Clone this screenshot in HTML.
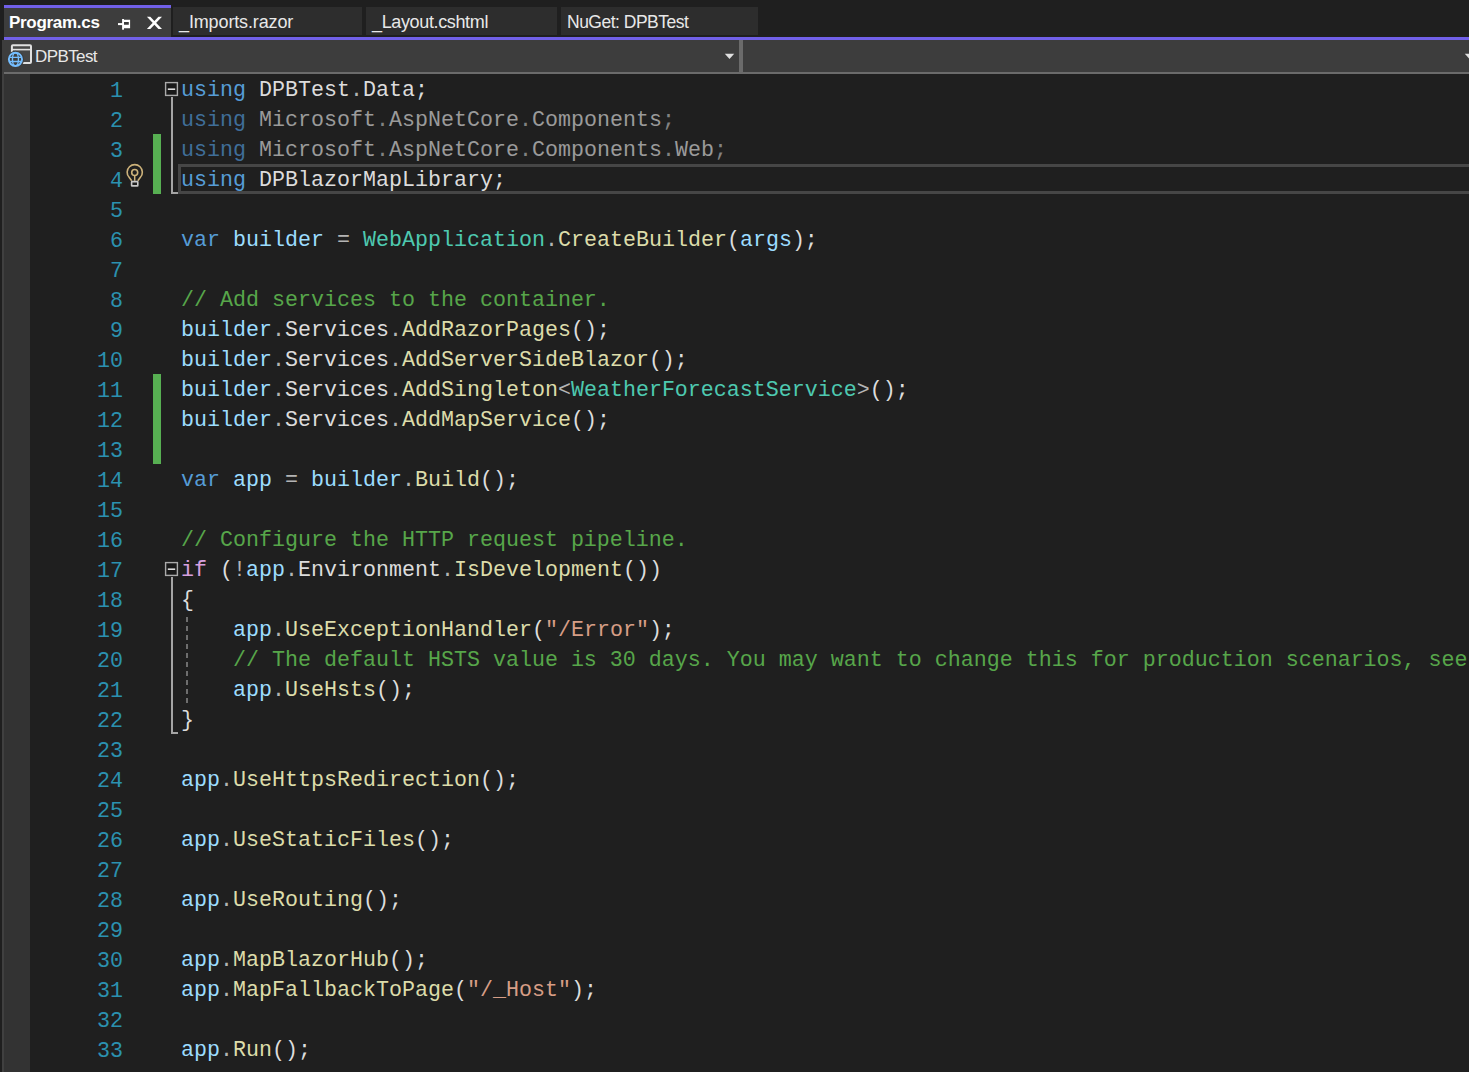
<!DOCTYPE html>
<html><head><meta charset="utf-8">
<style>
*{margin:0;padding:0;box-sizing:border-box}
html,body{width:1469px;height:1072px;overflow:hidden;background:#1f1f1f}
body{position:relative;font-family:"Liberation Sans",sans-serif}
.abs{position:absolute}
.tab{position:absolute;top:7px;height:28px;background:#2d2d2d;color:#e8e8e8;font-size:17px;line-height:28px;white-space:nowrap}
#t1{left:4px;top:5px;width:167px;height:32px;background:#3d3d3d;border-top:3px solid #7160e8;color:#fff;font-weight:bold;font-size:16.5px}
#purple{left:4px;top:37px;width:1465px;height:3px;background:#7160e8}
#nav{left:2px;top:40px;width:1467px;height:32px;background:#3d3d3d}
#navline{left:4px;top:72px;width:1465px;height:2px;background:#6b6b6b}
#navsep{left:739px;top:40px;width:4px;height:32px;background:#6b6b6b}
#margin{left:2px;top:74px;width:28px;height:998px;background:#333}
#marginedge{left:2px;top:72px;width:2px;height:1000px;background:#404040}
.code{position:absolute;left:0;top:74px;width:1469px;font-family:"Liberation Mono",monospace;font-size:21.66px;line-height:30px;white-space:pre}
.ln{position:absolute;left:0;width:123px;text-align:right;color:#2b91af;font-family:"Liberation Mono",monospace;font-size:21.66px;line-height:30px}
.l{position:absolute;left:181px;height:30px;color:#dcdcdc;font-family:"Liberation Mono",monospace;font-size:21.66px;line-height:30px;white-space:pre}
.k{color:#569cd6}.c{color:#4ec9b0}.m{color:#dcdcaa}.v{color:#9cdcfe}.p{color:#b4b4b4}.s{color:#d69d85}.g{color:#57a64a}.i{color:#d8a0df}
.fk{color:#3f6e99}.ft{color:#9a9a9a}.fp{color:#828282}
</style></head><body>
<div class="tab" id="t1"><span class="abs" style="left:5px;top:-1px;line-height:31px;font-size:17px;letter-spacing:-0.3px">Program.cs</span></div>
<div class="tab" style="left:173px;width:189px"><span class="abs" style="left:6px;top:1px;font-size:18px;letter-spacing:-0.13px">_Imports.razor</span></div>
<div class="tab" style="left:366px;width:191px"><span class="abs" style="left:6px;top:1px;font-size:18px;letter-spacing:-0.36px">_Layout.cshtml</span></div>
<div class="tab" style="left:561px;width:197px"><span class="abs" style="left:6px;top:1px;font-size:17.5px;letter-spacing:-0.5px">NuGet: DPBTest</span></div>
<div class="abs" id="purple"></div>
<div class="abs" id="nav"><span class="abs" style="left:33px;top:1px;line-height:32px;font-size:17px;letter-spacing:-0.6px;color:#e8e8e8">DPBTest</span></div>
<div class="abs" id="navsep"></div>
<div class="abs" id="navline"></div>
<div class="abs" id="margin"></div>
<div class="abs" id="marginedge"></div>

<!-- tab icons -->
<svg class="abs" style="left:112px;top:12px" width="56" height="24" viewBox="0 0 56 24">
 <path d="M6 12.1H11" stroke="#fff" stroke-width="2" fill="none"/>
 <rect x="10.1" y="7" width="1.9" height="10.7" fill="#fff"/>
 <path d="M12 7.8H18.1V16.2H12V12.8H16.8V10.1H12Z" fill="#fff"/>
 <path d="M34.9 4.85H38.3L50 16.95H46.4Z M46.4 4.85H50L38.3 16.95H34.9Z" fill="#fff"/>
</svg>
<!-- nav icon -->
<svg class="abs" style="left:4px;top:42px" width="32" height="30" viewBox="0 0 32 30">
 <rect x="7.9" y="3.2" width="19.1" height="17.8" rx="1" fill="#474747" stroke="#e0e0e0" stroke-width="2"/>
 <path d="M7.9 7.6H27" stroke="#e0e0e0" stroke-width="1.6"/>
 <circle cx="11.45" cy="17.35" r="8.6" fill="#3d3d3d"/>
 <circle cx="11.45" cy="17.35" r="6.6" fill="none" stroke="#75beff" stroke-width="1.9"/>
 <path d="M5 15.4H17.9M5 19.5H17.9" stroke="#75beff" stroke-width="1.4"/>
 <ellipse cx="11.45" cy="17.35" rx="3.0" ry="6.6" fill="none" stroke="#75beff" stroke-width="1.4"/>
</svg>
<svg class="abs" style="left:724px;top:53px" width="11" height="7" viewBox="0 0 11 7"><path d="M0.8 0.8H10.2L5.5 6Z" fill="#e0e0e0"/></svg>
<svg class="abs" style="left:1464px;top:53px" width="11" height="7" viewBox="0 0 11 7"><path d="M0.8 0.8H10.2L5.5 6Z" fill="#e0e0e0"/></svg>
<!-- green change bars -->
<div class="abs" style="left:153px;top:134px;width:8px;height:60px;background:#57af52"></div>
<div class="abs" style="left:153px;top:374px;width:8px;height:90px;background:#57af52"></div>
<!-- current line box -->
<div class="abs" style="left:178px;top:164px;width:1300px;height:30px;border:3px solid #464646"></div>
<!-- fold markers -->
<svg class="abs" style="left:160px;top:74px" width="40" height="700" viewBox="0 0 40 700">
 <rect x="5.6" y="8.6" width="11.8" height="12.8" fill="#191919" stroke="#aaa" stroke-width="1.4"/>
 <path d="M7.8 15.2H15.2" stroke="#ddd" stroke-width="1.6"/>
 <path d="M12 23V119H18" fill="none" stroke="#a5a5a5" stroke-width="2"/>
 <rect x="5.6" y="488.6" width="11.8" height="12.8" fill="#191919" stroke="#aaa" stroke-width="1.4"/>
 <path d="M7.8 495.2H15.2" stroke="#ddd" stroke-width="1.6"/>
 <path d="M12 503V659H18" fill="none" stroke="#a5a5a5" stroke-width="2"/>
 <path d="M27 543V629" stroke="#6e6e6e" stroke-width="2" stroke-dasharray="5 4"/>
</svg>
<!-- lightbulb -->
<svg class="abs" style="left:120px;top:160px" width="30" height="30" viewBox="0 0 30 30">
 <path d="M11.7 20.7L9.1 17.3A7.6 7.6 0 1 1 20.4 17.3L17.8 20.7" fill="none" stroke="#cdb27a" stroke-width="1.6"/>
 <circle cx="14.7" cy="12.5" r="3" fill="none" stroke="#cdb27a" stroke-width="1.6"/>
 <path d="M14.7 15.5V20.8" stroke="#cdb27a" stroke-width="1.5"/>
 <rect x="11.6" y="21.65" width="6.2" height="4.25" rx="0.5" fill="none" stroke="#c8c8c8" stroke-width="1.6"/>
</svg>
<div class="ln" style="top:77px">1</div>
<div class="l" style="top:76px"><span class="k">using</span> DPBTest<span class="p">.</span>Data;</div>
<div class="ln" style="top:107px">2</div>
<div class="l" style="top:106px"><span class="fk">using</span><span class="ft"> Microsoft</span><span class="fp">.</span><span class="ft">AspNetCore</span><span class="fp">.</span><span class="ft">Components</span><span class="fp">;</span></div>
<div class="ln" style="top:137px">3</div>
<div class="l" style="top:136px"><span class="fk">using</span><span class="ft"> Microsoft</span><span class="fp">.</span><span class="ft">AspNetCore</span><span class="fp">.</span><span class="ft">Components</span><span class="fp">.</span><span class="ft">Web</span><span class="fp">;</span></div>
<div class="ln" style="top:167px">4</div>
<div class="l" style="top:166px"><span class="k">using</span> DPBlazorMapLibrary;</div>
<div class="ln" style="top:197px">5</div>
<div class="ln" style="top:227px">6</div>
<div class="l" style="top:226px"><span class="k">var</span> <span class="v">builder</span> <span class="p">=</span> <span class="c">WebApplication</span><span class="p">.</span><span class="m">CreateBuilder</span>(<span class="v">args</span>);</div>
<div class="ln" style="top:257px">7</div>
<div class="ln" style="top:287px">8</div>
<div class="l" style="top:286px"><span class="g">// Add services to the container.</span></div>
<div class="ln" style="top:317px">9</div>
<div class="l" style="top:316px"><span class="v">builder</span><span class="p">.</span>Services<span class="p">.</span><span class="m">AddRazorPages</span>();</div>
<div class="ln" style="top:347px">10</div>
<div class="l" style="top:346px"><span class="v">builder</span><span class="p">.</span>Services<span class="p">.</span><span class="m">AddServerSideBlazor</span>();</div>
<div class="ln" style="top:377px">11</div>
<div class="l" style="top:376px"><span class="v">builder</span><span class="p">.</span>Services<span class="p">.</span><span class="m">AddSingleton</span><span class="p">&lt;</span><span class="c">WeatherForecastService</span><span class="p">&gt;</span>();</div>
<div class="ln" style="top:407px">12</div>
<div class="l" style="top:406px"><span class="v">builder</span><span class="p">.</span>Services<span class="p">.</span><span class="m">AddMapService</span>();</div>
<div class="ln" style="top:437px">13</div>
<div class="ln" style="top:467px">14</div>
<div class="l" style="top:466px"><span class="k">var</span> <span class="v">app</span> <span class="p">=</span> <span class="v">builder</span><span class="p">.</span><span class="m">Build</span>();</div>
<div class="ln" style="top:497px">15</div>
<div class="ln" style="top:527px">16</div>
<div class="l" style="top:526px"><span class="g">// Configure the HTTP request pipeline.</span></div>
<div class="ln" style="top:557px">17</div>
<div class="l" style="top:556px"><span class="i">if</span> (<span class="p">!</span><span class="v">app</span><span class="p">.</span>Environment<span class="p">.</span><span class="m">IsDevelopment</span>())</div>
<div class="ln" style="top:587px">18</div>
<div class="l" style="top:586px">{</div>
<div class="ln" style="top:617px">19</div>
<div class="l" style="top:616px">    <span class="v">app</span><span class="p">.</span><span class="m">UseExceptionHandler</span>(<span class="s">&quot;/Error&quot;</span>);</div>
<div class="ln" style="top:647px">20</div>
<div class="l" style="top:646px">    <span class="g">// The default HSTS value is 30 days. You may want to change this for production scenarios, see</span></div>
<div class="ln" style="top:677px">21</div>
<div class="l" style="top:676px">    <span class="v">app</span><span class="p">.</span><span class="m">UseHsts</span>();</div>
<div class="ln" style="top:707px">22</div>
<div class="l" style="top:706px">}</div>
<div class="ln" style="top:737px">23</div>
<div class="ln" style="top:767px">24</div>
<div class="l" style="top:766px"><span class="v">app</span><span class="p">.</span><span class="m">UseHttpsRedirection</span>();</div>
<div class="ln" style="top:797px">25</div>
<div class="ln" style="top:827px">26</div>
<div class="l" style="top:826px"><span class="v">app</span><span class="p">.</span><span class="m">UseStaticFiles</span>();</div>
<div class="ln" style="top:857px">27</div>
<div class="ln" style="top:887px">28</div>
<div class="l" style="top:886px"><span class="v">app</span><span class="p">.</span><span class="m">UseRouting</span>();</div>
<div class="ln" style="top:917px">29</div>
<div class="ln" style="top:947px">30</div>
<div class="l" style="top:946px"><span class="v">app</span><span class="p">.</span><span class="m">MapBlazorHub</span>();</div>
<div class="ln" style="top:977px">31</div>
<div class="l" style="top:976px"><span class="v">app</span><span class="p">.</span><span class="m">MapFallbackToPage</span>(<span class="s">&quot;/_Host&quot;</span>);</div>
<div class="ln" style="top:1007px">32</div>
<div class="ln" style="top:1037px">33</div>
<div class="l" style="top:1036px"><span class="v">app</span><span class="p">.</span><span class="m">Run</span>();</div>
</body></html>
